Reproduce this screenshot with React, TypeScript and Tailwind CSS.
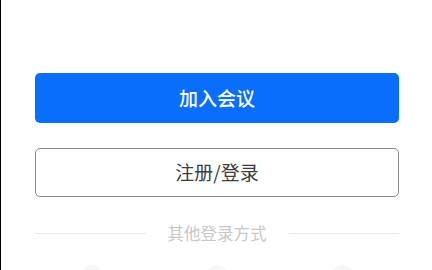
const font = { fontFamily: '"Noto Sans CJK SC", "Noto Sans", sans-serif' };

export default function App() {
    return (
        <div className="h-[270px] w-[432px] overflow-hidden bg-white border-l border-black" style={font}>
            <div className="flex flex-col pl-[34px] pr-[33px] pt-[73px]">
                <button className="h-[50px] w-full rounded-[5px] bg-[#0a6efd] text-[19px] font-medium text-white">
                    加入会议
                </button>
                <button className="mt-[25px] h-[49px] w-full rounded-[5px] border border-[#8a8a8a] bg-white text-[19px] font-normal text-[#3d3d3d]">
                    注册/登录
                </button>

                {/* Other login methods */}
                <div className="mt-[26px] flex items-center gap-[22px]">
                    <div className="h-px flex-1 bg-[#e8e8e8]" />
                    <span className="text-[16.5px] leading-[20px] text-[#c8c8c8]">其他登录方式</span>
                    <div className="h-px flex-1 bg-[#e8e8e8]" />
                </div>

                <div className="mt-[22px] flex justify-between px-[46px]">
                    <div className="h-[30px] w-[22px] rounded-full bg-[#f6f6f6]" />
                    <div className="h-[30px] w-[20px] rounded-full bg-[#f7f7f7]" />
                    <div className="h-[30px] w-[22px] rounded-full bg-[#f6f6f6]" />
                </div>
            </div>
        </div>
    );
}
